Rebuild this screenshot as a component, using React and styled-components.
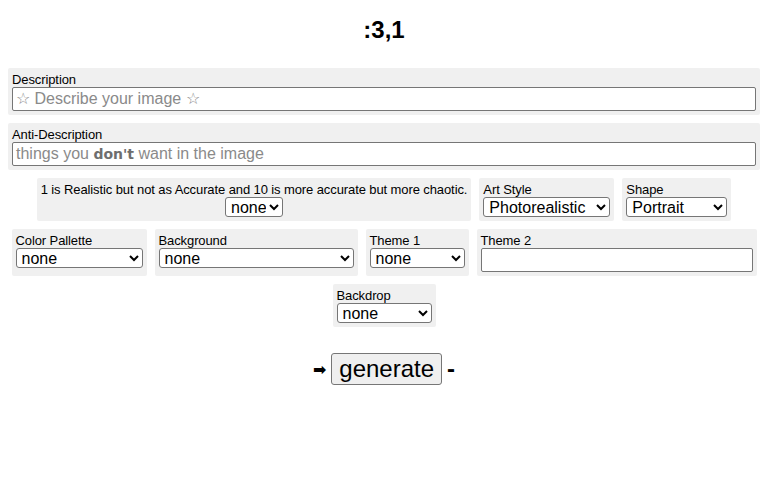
import React from "react";
import styled, { createGlobalStyle } from "styled-components";

const Global = createGlobalStyle`
  body {
    margin: 8px;
    font-family: "Liberation Sans", Arial, sans-serif;
    background: #ffffff;
    color: #000000;
  }
`;

const Title = styled.h1`
  margin: 0;
  height: 52px;
  padding-top: 8px;
  font-size: 24px;
  font-weight: bold;
  text-align: center;
  line-height: 28px;
`;

const Block = styled.div`
  background: #f0f0f0;
  padding: 4px;
  margin-bottom: 8px;
  border-radius: 2px;
`;

const Label = styled.div`
  font-size: 13px;
  line-height: 15px;
  letter-spacing: -0.1px;
`;

const TextInput = styled.input`
  display: block;
  box-sizing: border-box;
  width: ${(p) => p.$w || "100%"};
  height: 24px;
  margin: 0;
  padding: 1px 3px;
  font-family: "Liberation Sans", Arial, sans-serif;
  font-size: 16px;
  border: 1px solid #767676;
  border-radius: 2px;
  background: #fff;
  &::placeholder {
    color: #8a8a8a;
  }
`;

const FakeInput = styled.div`
  box-sizing: border-box;
  width: 100%;
  height: 24px;
  padding: 1px 3px;
  font-size: 16px;
  line-height: 20px;
  border: 1px solid #767676;
  border-radius: 2px;
  background: #fff;
  color: #8a8a8a;
  b {
    color: #6e6e6e;
    font-family: "DejaVu Sans", sans-serif;
    font-size: 14px;
  }
`;

const Options = styled.div`
  display: flex;
  flex-wrap: wrap;
  justify-content: center;
  gap: 8px;
  margin-top: 8px;
`;

const Item = styled.div`
  background: #f0f0f0;
  padding: 4px;
  border-radius: 2px;
  text-align: ${(p) => (p.$center ? "center" : "left")};
`;

const Select = styled.select`
  display: ${(p) => (p.$inline ? "inline-block" : "block")};
  box-sizing: border-box;
  width: ${(p) => p.$w}px;
  height: 20px;
  margin: 0;
  padding: 0 0 0 1px;
  font-family: "Liberation Sans", Arial, sans-serif;
  font-size: 16px;
  border: 1px solid #767676;
  border-radius: 3px;
  background: #fff;
  color: #000;
`;

const GenerateRow = styled.div`
  display: flex;
  justify-content: center;
  align-items: center;
  gap: 5px;
  margin-top: 26px;
  font-size: 24px;
  font-weight: bold;
`;

const Arrow = styled.span`
  font-family: "DejaVu Sans", sans-serif;
  font-size: 16px;
`;

const Button = styled.button`
  height: 32px;
  padding: 0 7px;
  font-family: "Liberation Sans", Arial, sans-serif;
  font-size: 24px;
  font-weight: normal;
  color: #000;
  background: #efefef;
  border: 1px solid #767676;
  border-radius: 3px;
`;

const none = <option>none</option>;

export default function App() {
  return (
    <>
      <Global />
      <Title>:3,1</Title>
      <Block>
        <Label>Description</Label>
        <TextInput placeholder="☆ Describe your image ☆" />
      </Block>
      <Block>
        <Label>Anti-Description</Label>
        <FakeInput>
          things you <b>don't</b> want in the image
        </FakeInput>
      </Block>
      <Options>
        <Item $center>
          <Label>1 is Realistic but not as Accurate and 10 is more accurate but more chaotic.</Label>
          <Select $inline $w={58}>{none}</Select>
        </Item>
        <Item>
          <Label>Art Style</Label>
          <Select $w={127}>
            <option>Photorealistic</option>
          </Select>
        </Item>
        <Item>
          <Label>Shape</Label>
          <Select $w={101}>
            <option>Portrait</option>
          </Select>
        </Item>
        <Item>
          <Label>Color Pallette</Label>
          <Select $w={127}>{none}</Select>
        </Item>
        <Item>
          <Label>Background</Label>
          <Select $w={195}>{none}</Select>
        </Item>
        <Item>
          <Label>Theme 1</Label>
          <Select $w={95}>{none}</Select>
        </Item>
        <Item>
          <Label>Theme 2</Label>
          <TextInput $w="272px" />
        </Item>
        <Item>
          <Label>Backdrop</Label>
          <Select $w={95}>{none}</Select>
        </Item>
      </Options>
      <GenerateRow>
        <Arrow>➡</Arrow>
        <Button>generate</Button>
        <span>-</span>
      </GenerateRow>
    </>
  );
}
